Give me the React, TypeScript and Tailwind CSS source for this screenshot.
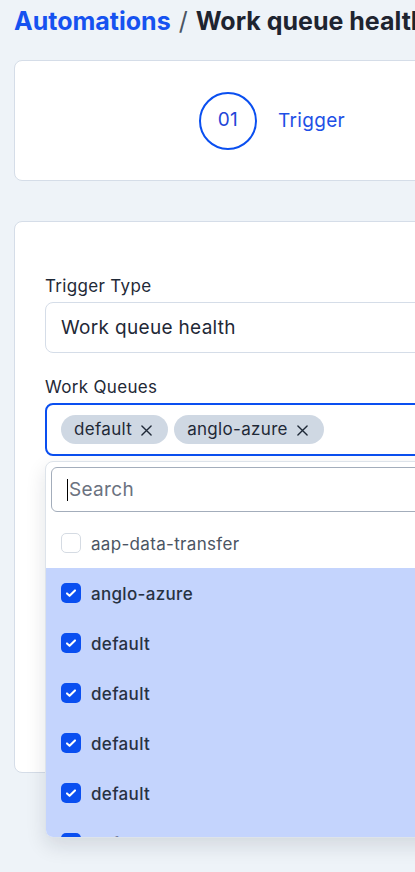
const queues = [
  { name: "aap-data-transfer", checked: false },
  { name: "anglo-azure", checked: true },
  { name: "default", checked: true },
  { name: "default", checked: true },
  { name: "default", checked: true },
  { name: "default", checked: true },
  { name: "default", checked: true },
];

function Check({ checked }: { checked: boolean }) {
  if (!checked) {
    return <span className="h-5 w-5 flex-shrink-0 rounded-[5px] border border-[#d5dbe3] bg-white" />;
  }
  return (
    <span className="flex h-5 w-5 flex-shrink-0 items-center justify-center rounded-[5px] bg-[#0a4ff0]">
      <svg viewBox="0 0 20 20" className="h-4 w-4" fill="none">
        <path d="M5 10.5l3.2 3L15 6.8" stroke="white" strokeWidth="2.6" strokeLinecap="round" strokeLinejoin="round" />
      </svg>
    </span>
  );
}

function Chip({ label }: { label: string }) {
  return (
    <span className="flex h-[29px] items-center gap-[9px] rounded-full bg-[#cfd8e3] pl-[13px] pr-[16px] pt-px text-[17px] text-[#1f2937]">
      {label}
      <svg viewBox="0 0 12 12" className="h-[11px] w-[11px]" fill="none">
        <path d="M1 1l10 10M11 1L1 11" stroke="#1f2937" strokeWidth="1.5" strokeLinecap="round" />
      </svg>
    </span>
  );
}

export default function App() {
  return (
    <div className="h-screen w-screen overflow-hidden bg-[#eef3f8] font-['Inter',sans-serif] tracking-[0.02em]">
      <div className="w-[900px] px-[14px]">
        {/* Breadcrumb */}
        <h1 className="mt-[5px] h-[32px] whitespace-nowrap text-[25px] font-bold leading-8 tracking-normal text-[#1e2430]">
          <span className="text-[#1652f0]">Automations</span>
          <span className="mx-[8px] font-normal text-[#4b5563]">/</span>
          Work queue health
        </h1>

        {/* Stepper */}
        <div className="mt-[23px] flex h-[121px] items-center rounded-lg border border-[#d5dde8] bg-white pl-[184px]">
          <div className="flex h-[58px] w-[58px] items-center justify-center rounded-full border-2 border-[#0a4ff0] text-[19px] text-[#2446d8]">
            01
          </div>
          <span className="ml-[21px] pt-[2px] text-[19px] text-[#1e50e6]">Trigger</span>
        </div>

        {/* Form card */}
        <div className="mt-[40px] h-[552px] rounded-lg border border-[#d5dde8] bg-white px-[30px] pt-[52px]">
          <label className="block text-[17px] leading-6 text-[#1f2937]">Trigger Type</label>
          <div className="mt-[4px] flex h-[51px] items-center rounded-lg border border-[#d5dde8] px-[15px] pt-px text-[19px] text-[#1f2937]">
            Work queue health
          </div>

          <label className="mt-[22px] block text-[17px] leading-6 text-[#1f2937]">Work Queues</label>
          <div className="relative mt-[4px]">
            <div className="flex h-[53px] items-center gap-[6px] rounded-lg border-2 border-[#0a4ff0] px-[14px]">
              <Chip label="default" />
              <Chip label="anglo-azure" />
            </div>

            {/* Dropdown menu */}
            <div className="absolute left-0 right-0 top-[58px] z-10 h-[377px] overflow-hidden rounded-lg border border-[#dde3ea] bg-white shadow-[0_8px_20px_rgba(15,23,42,0.12)]">
              <div className="p-[5px]">
                <div className="flex h-[45px] items-center rounded-md border border-[#a3adbb] px-[15px] pt-px text-[19px] text-[#6b7280]">
                  <span className="mr-[1px] h-[22px] w-px bg-black" />
                  Search
                </div>
              </div>
              <div className="pt-px">
                {queues.map((q, i) => (
                  <div
                    key={i}
                    className={`flex h-[50px] items-center gap-[10px] px-[15px] text-[17px] ${
                      q.checked ? "bg-[#c4d4fd] font-medium text-[#273142]" : "text-[#4b5563]"
                    }`}
                  >
                    <Check checked={q.checked} />
                    <span className="pt-[3px]">{q.name}</span>
                  </div>
                ))}
              </div>
            </div>
          </div>
        </div>
      </div>
    </div>
  );
}
